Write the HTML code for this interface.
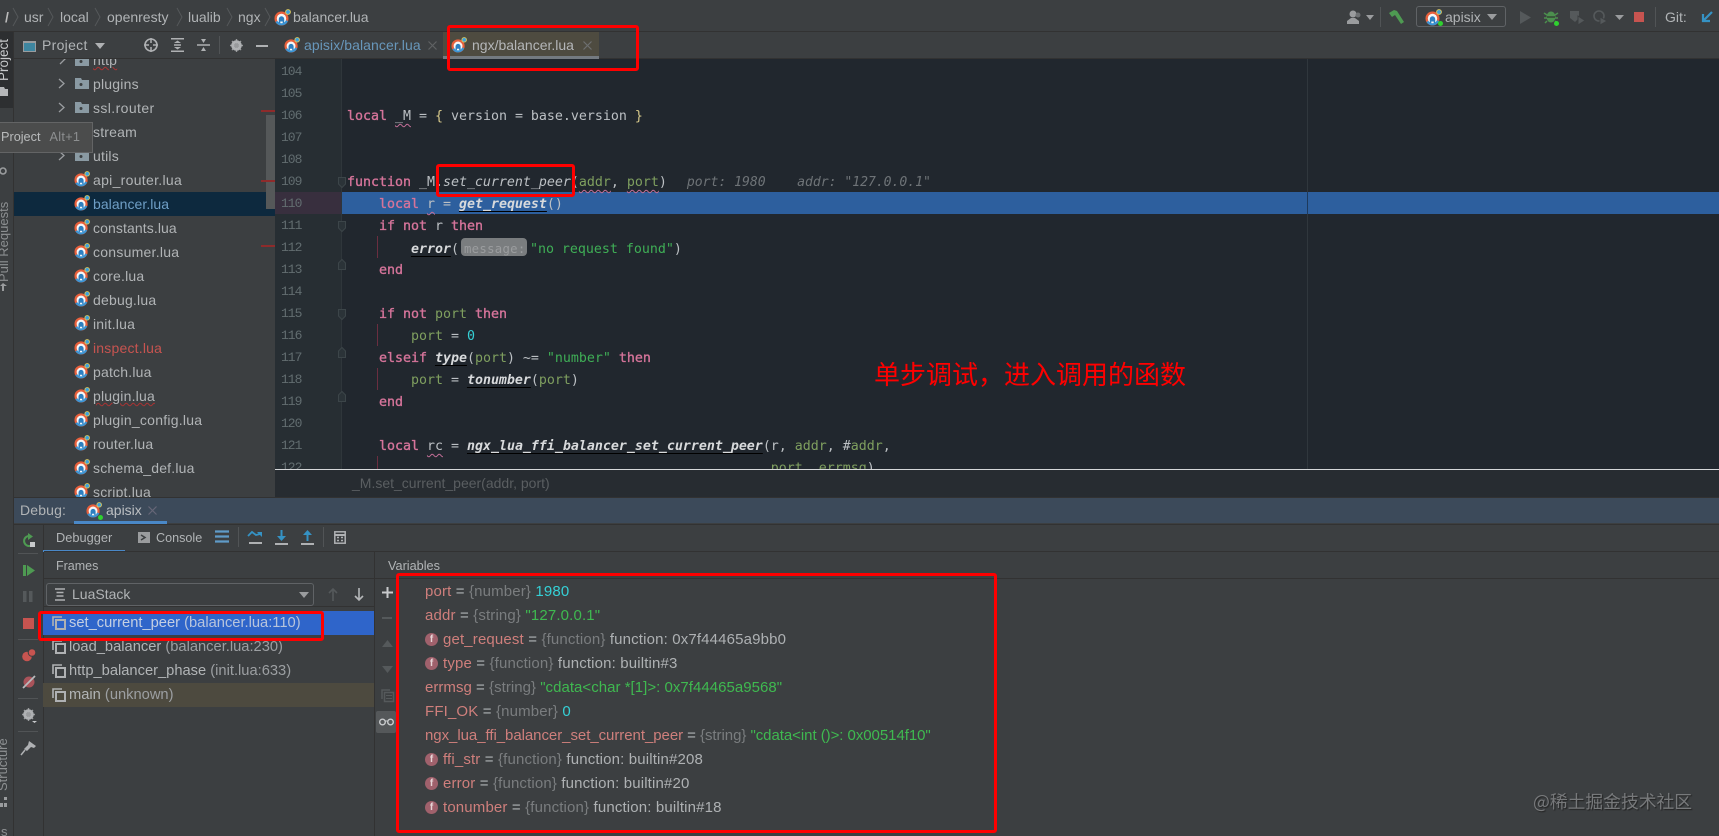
<!DOCTYPE html>
<html><head><meta charset="utf-8"><style>
html,body{margin:0;padding:0;background:#3c3f41}
#p{position:relative;width:1719px;height:836px;overflow:hidden;background:#3c3f41;font:14px/20px "Liberation Sans","Noto Sans CJK SC",sans-serif;color:#b1b4b6}
.a{position:absolute;white-space:pre}
.b{position:absolute}
.r{position:absolute;border:3.5px solid #f00;border-radius:3px;box-sizing:border-box}
svg{position:absolute;overflow:visible}
#tree .a{letter-spacing:.2px}
.mono{font-family:"DejaVu Sans Mono","Liberation Mono",monospace;font-size:13.3px;line-height:22px;color:#bcc0c4}
.l{height:22px;white-space:pre;padding-left:6px;width:1372px;letter-spacing:-.01px}
.k{color:#d5749a;-webkit-text-stroke:.35px #d5749a}
.v{color:#7f9f5f}
.s{color:#3fae56}
.n{color:#35d0d6}
.f{font-style:italic;font-weight:bold;color:#d8dadc;text-decoration:underline;text-decoration-color:#000;text-underline-offset:3px}
.w{text-decoration:underline wavy #c56f98 1px;text-underline-offset:3px}
.num{position:absolute;left:281px;width:24px;font:13px/22px "Liberation Mono",monospace;letter-spacing:-1px;color:#626d70}
.g{color:#7a7d7f}.q{color:#cf7f7c}.y{color:#35d0d6}.z{color:#3fb950}.x{color:#aeb1b3}
.va{font-size:15px;letter-spacing:.15px}
.fr{font-size:14.7px}
.fi{position:absolute;left:425px;width:13px;height:13px;border-radius:50%;background:#a0616c;color:#e6d4d6;font:bold 10px/13px "Liberation Sans",sans-serif;text-align:center}
</style></head><body><div id="p">
<svg width="0" height="0" style="position:absolute"><defs>
<symbol id="lua" viewBox="0 0 17 17">
<circle cx="7.5" cy="9.500" r="7" fill="#e8603c"/>
<path d="M1.500 13A7 7 0 0 0 14 12L7.500 9.500Z" fill="#3a94d4"/>
<circle cx="7.500" cy="9.500" r="4.700" fill="#f6f6f6"/>
<path d="M4.800 14V10A2.700 2.700 0 0 1 10.200 10V14H8.700V12.500H6.300V14Z" fill="#2d7fc0"/>
<circle cx="14" cy="3" r="2.400" fill="#3aa0e0" stroke="#d8c860"/>
</symbol>
<symbol id="stk" viewBox="0 0 14 14"><path d="M1 10V1H10" fill="none" stroke="#afb1b3" stroke-width="1.6"/><rect x="4" y="4" width="9" height="9" fill="none" stroke="#afb1b3" stroke-width="2"/></symbol>
<symbol id="fld" viewBox="0 0 14 11"><path d="M0 0H6L7 2H14V11H0Z" fill="#8a9aa3"/><circle cx="6" cy="6.5" r="1.5" fill="#3c3f41"/></symbol>
<symbol id="chv" viewBox="0 0 7 11"><path d="M1 1L6 5.5L1 10" fill="none" stroke="#9a9da0" stroke-width="1.3"/></symbol>
<symbol id="bc" viewBox="0 0 7 22"><path d="M1 2L6 11L1 20" fill="none" stroke="#55585a" stroke-width="1"/></symbol>
</defs></svg>

<!-- top bar -->
<div class="b" style="left:0;top:31px;width:1719px;height:1px;background:#323232"></div>
<div class="a" style="left:5px;top:7px;font-weight:bold;color:#bbb">/</div>
<svg style="left:12px;top:6px" width="7" height="22"><use href="#bc"/></svg>
<div class="a" style="left:24px;top:7px">usr</div>
<svg style="left:47px;top:6px" width="7" height="22"><use href="#bc"/></svg>
<div class="a" style="left:60px;top:7px">local</div>
<svg style="left:94px;top:6px" width="7" height="22"><use href="#bc"/></svg>
<div class="a" style="left:107px;top:7px">openresty</div>
<svg style="left:176px;top:6px" width="7" height="22"><use href="#bc"/></svg>
<div class="a" style="left:188px;top:7px">lualib</div>
<svg style="left:226px;top:6px" width="7" height="22"><use href="#bc"/></svg>
<div class="a" style="left:238px;top:7px">ngx</div>
<svg style="left:264px;top:6px" width="7" height="22"><use href="#bc"/></svg>
<svg style="left:274px;top:9px" width="17" height="17"><use href="#lua"/></svg>
<div class="a" style="left:293px;top:7px">balancer.lua</div>

<!-- top right toolbar -->
<svg style="left:1347px;top:10px" width="15" height="14"><circle cx="6" cy="4" r="3.5" fill="#9a9c9e"/><path d="M0 14V11L4 8H8L12 11V14Z" fill="#9a9c9e"/><circle cx="11" cy="5" r="2.5" fill="#6d7072"/></svg>
<svg style="left:1365px;top:15px" width="10" height="5"><path d="M1 0H9L5 5Z" fill="#9a9c9e"/></svg>
<div class="b" style="left:1380px;top:7px;width:1px;height:20px;background:#515456"></div>
<svg style="left:1389px;top:9px" width="16" height="15"><path d="M0 4L5 1L8 2L15 13L12 15L6 6L3 8Z" fill="#4e9a52"/></svg>
<div class="b" style="left:1416px;top:6px;width:90px;height:21px;border:1px solid #606366;border-radius:3px;box-sizing:border-box"></div>
<svg style="left:1425px;top:9px" width="17" height="17"><use href="#lua"/></svg>
<div class="b" style="left:1438px;top:21px;width:5px;height:5px;border-radius:50%;background:#2fd12f"></div>
<div class="a" style="left:1445px;top:7px">apisix</div>
<svg style="left:1487px;top:14px" width="10" height="6"><path d="M0 0H10L5 6Z" fill="#9a9c9e"/></svg>
<svg style="left:1520px;top:11px" width="11" height="13"><path d="M0 0L11 6.5L0 13Z" fill="#55595b"/></svg>
<svg style="left:1544px;top:9px" width="15" height="15"><ellipse cx="7" cy="8" rx="4.5" ry="5.5" fill="#4c8f4e"/><path d="M0 4L3 6M14 4L11 6M0 9H3M14 9H11M1 14L3 12M13 14L11 12" stroke="#4c8f4e" stroke-width="1.5"/><path d="M3 8H11" stroke="#2f3a30" stroke-width="1.3"/></svg>
<div class="b" style="left:1554px;top:21px;width:5px;height:5px;border-radius:50%;background:#2fd12f"></div>
<svg style="left:1570px;top:10px" width="15" height="15"><path d="M0 1H9V8L5 12L0 8Z" fill="#55595b"/><path d="M8 6L15 10.5L8 15Z" fill="#55595b" stroke="#3c3f41"/></svg>
<svg style="left:1593px;top:10px" width="15" height="15"><circle cx="6" cy="6" r="5" fill="none" stroke="#55595b" stroke-width="1.6"/><path d="M7 7L14 11L7 15Z" fill="#55595b" stroke="#3c3f41"/></svg>
<svg style="left:1615px;top:15px" width="9" height="5"><path d="M0 0H9L4.500 5Z" fill="#9a9c9e"/></svg>
<div class="b" style="left:1634px;top:12px;width:10px;height:10px;background:#c75450"></div>
<div class="b" style="left:1655px;top:7px;width:1px;height:20px;background:#515456"></div>
<div class="a" style="left:1665px;top:7px">Git:</div>
<svg style="left:1701px;top:11px" width="12" height="12"><path d="M11 1L2 10M2 3V10H9" fill="none" stroke="#3592c4" stroke-width="2.2"/></svg>

<!-- left strip -->
<div class="b" style="left:13px;top:32px;width:1px;height:804px;background:#323232"></div>
<div class="b" style="left:0;top:32px;width:13px;height:76px;background:#2d2f31"></div>
<div class="a" style="left:-3px;top:81px;transform-origin:0 0;transform:rotate(-90deg);color:#c8cacc;line-height:14px;font-size:13.5px">Project</div>
<svg style="left:0;top:87px" width="8" height="9"><path d="M0 0H4L5 2H8V9H0Z" fill="#b5b7b9"/></svg>
<div class="a" style="left:-3px;top:282px;transform-origin:0 0;transform:rotate(-90deg);color:#8d9092;line-height:14px;font-size:13px">Pull Requests</div>
<svg style="left:0;top:166px" width="8" height="10"><circle cx="3" cy="5" r="3" fill="none" stroke="#9a9c9e" stroke-width="1.6"/></svg>
<svg style="left:0;top:283px" width="8" height="8"><path d="M3 0L0 3H2V8H4V3H7Z" fill="#9a9c9e"/></svg>
<div class="a" style="left:-4px;top:791px;transform-origin:0 0;transform:rotate(-90deg);color:#8d9092;line-height:14px;font-size:13px">Structure</div>
<svg style="left:0;top:797px" width="8" height="10"><path d="M0 6H3V10H0ZM4 0H7V3H4ZM4 6H7V10H4Z" fill="#9a9c9e"/></svg>
<div class="a" style="left:1px;top:822px;color:#8d9092;font-size:13px">s</div>

<!-- project header -->
<div class="b" style="left:14px;top:58px;width:261px;height:1px;background:#323232"></div>
<div class="b" style="left:23px;top:41px;width:13px;height:11px;border:1px solid #9a9c9e;background:#3e86a0;box-sizing:border-box;border-top-width:2px"></div>
<div class="a" style="left:42px;top:35px;letter-spacing:.3px">Project</div>
<svg style="left:95px;top:43px" width="10" height="6"><path d="M0 0H10L5 6Z" fill="#afb1b3"/></svg>
<svg style="left:144px;top:38px" width="14" height="14"><circle cx="7" cy="7" r="6" fill="none" stroke="#afb1b3" stroke-width="1.6"/><path d="M7 0V5M7 9V14M0 7H5M9 7H14" stroke="#afb1b3" stroke-width="1.5"/></svg>
<svg style="left:171px;top:38px" width="13" height="14"><path d="M0 .8H13M0 13.200H13M3 7H10" stroke="#afb1b3" stroke-width="1.5"/><path d="M3 5L6.500 2.500L10 5ZM3 9L6.500 11.500L10 9Z" fill="#afb1b3"/></svg>
<svg style="left:197px;top:38px" width="13" height="14"><path d="M0 7H13" stroke="#afb1b3" stroke-width="1.5"/><path d="M4 1H9L6.500 5ZM4 13H9L6.500 9Z" fill="#afb1b3"/></svg>
<div class="b" style="left:219px;top:36px;width:1px;height:18px;background:#515456"></div>
<svg style="left:230px;top:39px" width="13" height="13"><circle cx="6.500" cy="6.500" r="3.800" fill="none" stroke="#afb1b3" stroke-width="3"/><path d="M6.500 0V13M0 6.500H13M2 2L11 11M11 2L2 11" stroke="#afb1b3" stroke-width="1.400" opacity=".8"/></svg>
<div class="b" style="left:256px;top:45px;width:12px;height:2px;background:#afb1b3"></div>

<!-- tree -->
<div class="b" style="left:14px;top:59px;width:261px;height:438px;overflow:hidden">
<div class="b" style="left:0;top:133px;width:261px;height:24px;background:#0d293e"></div>
</div>
<div class="b" style="left:14px;top:59px;width:261px;height:438px;overflow:hidden" id="tree">
<svg style="left:45px;top:0" width="7" height="5"><path d="M1 -5L6 0L1 5" fill="none" stroke="#9a9da0" stroke-width="1.3"/></svg>
<svg style="left:61px;top:-4px" width="14" height="11"><use href="#fld"/></svg>
<div class="a" style="left:79px;top:-9px;text-decoration:underline wavy #a33 1px">http</div>
<svg style="left:44px;top:19px" width="7" height="11"><use href="#chv"/></svg>
<svg style="left:61px;top:19px" width="14" height="11"><use href="#fld"/></svg>
<div class="a" style="left:79px;top:15px">plugins</div>
<svg style="left:44px;top:43px" width="7" height="11"><use href="#chv"/></svg>
<svg style="left:61px;top:43px" width="14" height="11"><use href="#fld"/></svg>
<div class="a" style="left:79px;top:39px;letter-spacing:.4px">ssl.router</div>
<div class="a" style="left:79px;top:63px">stream</div>
<svg style="left:44px;top:91px" width="7" height="11"><use href="#chv"/></svg>
<svg style="left:61px;top:91px" width="14" height="11"><use href="#fld"/></svg>
<div class="a" style="left:79px;top:87px">utils</div>
<svg style="left:60px;top:112px" width="16" height="16"><use href="#lua"/></svg><div class="a" style="left:79px;top:111px;letter-spacing:.3px">api_router.lua</div>
<svg style="left:60px;top:136px" width="16" height="16"><use href="#lua"/></svg><div class="a" style="left:79px;top:135px;color:#6f9fc6;letter-spacing:.05px">balancer.lua</div>
<svg style="left:60px;top:160px" width="16" height="16"><use href="#lua"/></svg><div class="a" style="left:79px;top:159px;letter-spacing:.1px">constants.lua</div>
<svg style="left:60px;top:184px" width="16" height="16"><use href="#lua"/></svg><div class="a" style="left:79px;top:183px;letter-spacing:.25px">consumer.lua</div>
<svg style="left:60px;top:208px" width="16" height="16"><use href="#lua"/></svg><div class="a" style="left:79px;top:207px">core.lua</div>
<svg style="left:60px;top:232px" width="16" height="16"><use href="#lua"/></svg><div class="a" style="left:79px;top:231px">debug.lua</div>
<svg style="left:60px;top:256px" width="16" height="16"><use href="#lua"/></svg><div class="a" style="left:79px;top:255px">init.lua</div>
<svg style="left:60px;top:280px" width="16" height="16"><use href="#lua"/></svg><div class="a" style="left:79px;top:279px;color:#c75450">inspect.lua</div>
<svg style="left:60px;top:304px" width="16" height="16"><use href="#lua"/></svg><div class="a" style="left:79px;top:303px">patch.lua</div>
<svg style="left:60px;top:328px" width="16" height="16"><use href="#lua"/></svg><div class="a" style="left:79px;top:327px;text-decoration:underline wavy #a33 1px">plugin.lua</div>
<svg style="left:60px;top:352px" width="16" height="16"><use href="#lua"/></svg><div class="a" style="left:79px;top:351px;letter-spacing:.25px">plugin_config.lua</div>
<svg style="left:60px;top:376px" width="16" height="16"><use href="#lua"/></svg><div class="a" style="left:79px;top:375px">router.lua</div>
<svg style="left:60px;top:400px" width="16" height="16"><use href="#lua"/></svg><div class="a" style="left:79px;top:399px">schema_def.lua</div>
<svg style="left:60px;top:424px" width="16" height="16"><use href="#lua"/></svg><div class="a" style="left:79px;top:423px">script.lua</div>
</div>
<div class="b" style="left:266px;top:115px;width:9px;height:94px;background:#555859"></div>
<div class="b" style="left:261px;top:110px;width:14px;height:2px;background:#8e2b2b"></div>
<div class="b" style="left:261px;top:180px;width:14px;height:2px;background:#8e2b2b"></div>
<div class="b" style="left:261px;top:245px;width:14px;height:2px;background:#8e2b2b"></div>

<!-- tooltip -->
<div class="a" style="left:-1px;top:122px;width:94px;height:31px;background:#4b4c4c;border:1px solid #636465;box-sizing:border-box;font-size:12.7px;line-height:29px;color:#b9bbbc;padding-left:1px">Project<span style="color:#8d8f90;margin-left:9px;letter-spacing:.3px">Alt+1</span></div>

<!-- tabs -->
<div class="b" style="left:275px;top:32px;width:1444px;height:27px;background:#3c3f41;border-bottom:1px solid #323232;box-sizing:border-box"></div>
<svg style="left:284px;top:37px" width="16" height="16"><use href="#lua"/></svg>
<div class="a" style="left:304px;top:35px;color:#6897bb;letter-spacing:.08px">apisix/balancer.lua</div>
<svg style="left:428px;top:41px" width="9" height="9"><path d="M.5 .5L8.500 8.500M8.500 .5L.5 8.500" stroke="#5f6264" stroke-width="1.200"/></svg>
<div class="b" style="left:443px;top:32px;width:156px;height:24px;background:#4e4b40"></div>
<div class="b" style="left:443px;top:56px;width:156px;height:3px;background:#747a80"></div>
<svg style="left:451px;top:37px" width="16" height="16"><use href="#lua"/></svg>
<div class="a" style="left:472px;top:35px;color:#b4b6b8">ngx/balancer.lua</div>
<svg style="left:583px;top:41px" width="9" height="9"><path d="M.5 .5L8.500 8.500M8.500 .5L.5 8.500" stroke="#6d6f70" stroke-width="1.200"/></svg>

<!-- editor -->
<div class="b" style="left:275px;top:59px;width:1444px;height:410px;background:#21272e;overflow:hidden">
<div class="b" style="left:0;top:0;width:67px;height:410px;background:#272e33;border-right:1px solid #2f363b;box-sizing:border-box"></div>
<div class="b" style="left:0;top:133px;width:66px;height:22px;background:#382f3e"></div>
<div class="b" style="left:1032px;top:0;width:1px;height:410px;background:#30373d"></div>
</div>
<div class="b" style="left:0;top:1px">
<div class="num" style="top:60px">104</div><div class="num" style="top:82px">105</div><div class="num" style="top:104px">106</div><div class="num" style="top:126px">107</div><div class="num" style="top:148px">108</div><div class="num" style="top:170px">109</div><div class="num" style="top:192px">110</div><div class="num" style="top:214px">111</div><div class="num" style="top:236px">112</div><div class="num" style="top:258px">113</div><div class="num" style="top:280px">114</div><div class="num" style="top:302px">115</div><div class="num" style="top:324px">116</div><div class="num" style="top:346px">117</div><div class="num" style="top:368px">118</div><div class="num" style="top:390px">119</div><div class="num" style="top:412px">120</div><div class="num" style="top:434px">121</div><div class="num" style="top:456px;height:12px;overflow:hidden">122</div>
</div>
<svg style="left:338px;top:60px" width="9" height="340">
<g fill="#2b3338" stroke="#3c4549"><path d="M.5 117.500H7.500V124L4 127.500L.5 124Z"/><path d="M.5 161.500H7.500V168L4 171.500L.5 168Z"/><path d="M.5 249.500H7.500V256L4 259.500L.5 256Z"/><path d="M.5 209.500V203L4 199.500L7.500 203V209.500Z"/><path d="M.5 297.500V291L4 287.500L7.500 291V297.500Z"/><path d="M.5 341.500V335L4 331.500L7.500 335V341.500Z"/></g>
</svg>
<div class="b" style="left:342px;top:192px;width:1377px;height:22px;background:#2d5f9e"></div>
<div class="b" style="left:1307px;top:192px;width:1px;height:22px;background:#1e3a5c"></div>
<div class="b" style="left:377px;top:236px;width:1px;height:22px;background:#6b2e40"></div>
<div class="b" style="left:377px;top:324px;width:1px;height:22px;background:#6b2e40"></div>
<div class="b" style="left:377px;top:368px;width:1px;height:22px;background:#6b2e40"></div>
<div class="b" style="left:377px;top:456px;width:1px;height:13px;background:#6b2e40"></div>
<div class="b" style="left:461px;top:238px;width:66px;height:18px;background:#7a7d7f;border-radius:4px"></div>
<div class="b mono" style="left:341px;top:62px;width:1378px;height:407px;overflow:hidden">
<div class="l"> </div><div class="l"> </div>
<div class="l"><span class="k">local</span> <span class="w">_M</span> = <span style="color:#d6c88a">{</span> version = base.version <span style="color:#d6c88a">}</span></div>
<div class="l"> </div><div class="l"> </div>
<div class="l"><span class="k">function</span> _M.<span style="font-style:italic">set_current_peer</span>(<span class="v w">addr</span>, <span class="v w">port</span>)<span style="font-style:italic;color:#6e7377;font-size:13.1px;margin-left:20px">port: 1980    addr: "127.0.0.1"</span></div>
<div class="l">    <span class="k">local</span> <span class="w">r</span> = <span class="f">get_request</span>()</div>
<div class="l">    <span class="k">if</span> <span class="k">not</span> r <span class="k">then</span></div>
<div class="l">        <span class="f">error</span>(<span style="display:inline-block;width:71px;color:#9b9d9f;font-size:12.3px;letter-spacing:.3px;box-sizing:border-box;padding-left:5px">message:</span><span class="s">"no request found"</span>)</div>
<div class="l">    <span class="k">end</span></div>
<div class="l"> </div>
<div class="l">    <span class="k">if</span> <span class="k">not</span> <span class="v">port</span> <span class="k">then</span></div>
<div class="l">        <span class="v">port</span> = <span class="n">0</span></div>
<div class="l">    <span class="k">elseif</span> <span class="f">type</span>(<span class="v">port</span>) ~= <span class="s">"number"</span> <span class="k">then</span></div>
<div class="l">        <span class="v">port</span> = <span class="f">tonumber</span>(<span class="v">port</span>)</div>
<div class="l">    <span class="k">end</span></div>
<div class="l"> </div>
<div class="l">    <span class="k">local</span> <span class="w">rc</span> = <span class="f">ngx_lua_ffi_balancer_set_current_peer</span>(r, <span class="v">addr</span>, #<span class="v">addr</span>,</div>
<div class="l">                                                     <span class="v">port</span>, <span class="v">errmsg</span>)</div>
</div>
<div class="b" style="left:275px;top:469px;width:1444px;height:1px;background:#d5d7d9"></div>
<div class="b" style="left:275px;top:470px;width:1444px;height:27px;background:#272c31"></div>
<div class="a" style="left:352px;top:473px;color:#5a5e61">_M.set_current_peer(addr, port)</div>
<div class="a" style="left:874px;top:358px;font-size:26px;line-height:32px;color:#f00;font-family:'Noto Sans CJK SC',sans-serif">单步调试，进入调用的函数</div>

<!-- debug header -->
<div class="b" style="left:14px;top:497px;width:1705px;height:26px;background:#3c4a5a;border-top:1px solid #323232;box-sizing:border-box"></div>
<div class="a" style="left:20px;top:500px;letter-spacing:.15px">Debug:</div>
<svg style="left:86px;top:502px" width="16" height="16"><use href="#lua"/></svg>
<div class="b" style="left:98px;top:515px;width:5px;height:5px;border-radius:50%;background:#2fd12f"></div>
<div class="a" style="left:106px;top:500px;color:#bcbfc2">apisix</div>
<svg style="left:148px;top:506px" width="9" height="9"><path d="M.5 .5L8.500 8.500M8.500 .5L.5 8.500" stroke="#667" stroke-width="1.200"/></svg>
<div class="b" style="left:74px;top:521px;width:93px;height:3px;background:#4a88c7"></div>
<div class="b" style="left:14px;top:524px;width:1705px;height:1px;background:#323232"></div>

<!-- debug toolbar -->
<div class="b" style="left:43px;top:525px;width:1px;height:311px;background:#323232"></div>
<div class="a" style="left:56px;top:528px;font-size:12.8px">Debugger</div>
<div class="b" style="left:43px;top:550px;width:82px;height:2px;background:#4a88c7"></div>
<div class="b" style="left:44px;top:551px;width:1675px;height:1px;background:#323232"></div>
<div class="b" style="left:138px;top:532px;width:12px;height:11px;background:#9a9c9e"></div>
<svg style="left:140px;top:534px" width="7" height="7"><path d="M1 1L5 3.500L1 6" fill="none" stroke="#3c3f41" stroke-width="1.500"/></svg>
<div class="a" style="left:156px;top:528px;font-size:12.6px">Console</div>
<svg style="left:215px;top:530px" width="14" height="13"><path d="M0 1.500H14M0 6.500H14M0 11.500H14" stroke="#5f9bc8" stroke-width="2.200"/></svg>
<div class="b" style="left:238px;top:527px;width:1px;height:20px;background:#515456"></div>
<svg style="left:248px;top:530px" width="15" height="15"><path d="M0 6L4 2L8 5L12 4" fill="none" stroke="#3592c4" stroke-width="1.800"/><path d="M9 2H14V7Z" fill="#3592c4"/><path d="M1 13H14" stroke="#afb1b3" stroke-width="2"/></svg>
<svg style="left:275px;top:530px" width="13" height="15"><path d="M6.500 0V8" stroke="#3592c4" stroke-width="2"/><path d="M2 6H11L6.500 11Z" fill="#3592c4"/><path d="M0 14H13" stroke="#afb1b3" stroke-width="2"/></svg>
<svg style="left:301px;top:530px" width="13" height="15"><path d="M6.500 11V4" stroke="#3592c4" stroke-width="2"/><path d="M2 5H11L6.500 0Z" fill="#3592c4"/><path d="M0 14H13" stroke="#afb1b3" stroke-width="2"/></svg>
<div class="b" style="left:323px;top:527px;width:1px;height:20px;background:#515456"></div>
<svg style="left:334px;top:531px" width="12" height="13"><rect x=".8" y=".8" width="10.400" height="11.400" fill="none" stroke="#afb1b3" stroke-width="1.500"/><path d="M1 4H11" stroke="#afb1b3" stroke-width="2"/><path d="M3 6.500H5M7 6.500H9M3 9.500H5M7 9.500H9" stroke="#afb1b3" stroke-width="1.500"/></svg>

<!-- left debug column -->
<svg style="left:22px;top:533px" width="14" height="15"><path d="M7 3A5 5 0 1 0 12 9" fill="none" stroke="#4e9a52" stroke-width="2"/><path d="M6 0L11 3.500L6 7Z" fill="#4e9a52"/><rect x="8" y="9" width="5" height="5" fill="#c8cacc"/></svg>
<div class="b" style="left:18px;top:553px;width:20px;height:1px;background:#515456"></div>
<svg style="left:23px;top:565px" width="12" height="11"><rect width="3" height="11" fill="#4e9a52"/><path d="M4 0L12 5.500L4 11Z" fill="#4e9a52"/></svg>
<svg style="left:23px;top:591px" width="10" height="11"><path d="M0 0H3.500V11H0ZM6 0H9.500V11H6Z" fill="#55595b"/></svg>
<div class="b" style="left:23px;top:618px;width:11px;height:11px;background:#c75450"></div>
<div class="b" style="left:18px;top:639px;width:20px;height:1px;background:#515456"></div>
<svg style="left:22px;top:648px" width="14" height="14"><circle cx="5" cy="8.500" r="4.800" fill="#c75450"/><circle cx="10" cy="4.500" r="3.800" fill="#c75450" stroke="#3c3f41"/></svg>
<svg style="left:22px;top:675px" width="14" height="14"><circle cx="7" cy="7" r="5.500" fill="#a9535a"/><path d="M1 13L13 1" stroke="#b8babc" stroke-width="1.800"/></svg>
<div class="b" style="left:18px;top:698px;width:20px;height:1px;background:#515456"></div>
<svg style="left:22px;top:708px" width="15" height="15"><circle cx="6.500" cy="6.500" r="3.800" fill="none" stroke="#afb1b3" stroke-width="3"/><path d="M6.500 0V13M0 6.500H13M2 2L11 11M11 2L2 11" stroke="#afb1b3" stroke-width="1.400" opacity=".8"/><path d="M10 13H15L12.500 15Z" fill="#c8cacc"/></svg>
<div class="b" style="left:18px;top:731px;width:20px;height:1px;background:#515456"></div>
<svg style="left:21px;top:741px" width="15" height="14"><path d="M8 0L15 5L13 7L10 6L6 10L3 8L7 4Z" fill="#afb1b3"/><path d="M4 9L0 14" stroke="#afb1b3" stroke-width="1.500"/></svg>

<!-- frames -->
<div class="a" style="left:56px;top:556px;font-size:12.5px">Frames</div>
<div class="a" style="left:388px;top:556px;font-size:12.7px">Variables</div>
<div class="b" style="left:44px;top:578px;width:1675px;height:1px;background:#323232"></div>
<div class="b" style="left:374px;top:552px;width:1px;height:284px;background:#323232"></div>
<div class="b" style="left:46px;top:583px;width:268px;height:23px;border:1px solid #606366;border-radius:3px;box-sizing:border-box"></div>
<svg style="left:54px;top:588px" width="13" height="13"><path d="M1 1H11M2.500 4.500H9.500M2.500 8H9.500M1 12H11" stroke="#afb1b3" stroke-width="1.600"/></svg>
<div class="a" style="left:72px;top:584px;font-size:14px">LuaStack</div>
<svg style="left:299px;top:592px" width="10" height="6"><path d="M0 0H10L5 6Z" fill="#9a9c9e"/></svg>
<svg style="left:328px;top:588px" width="10" height="13"><path d="M5 13V1M1 5L5 1L9 5" fill="none" stroke="#55595b" stroke-width="1.600"/></svg>
<svg style="left:354px;top:588px" width="10" height="13"><path d="M5 0V12M1 8L5 12L9 8" fill="none" stroke="#b5b7b9" stroke-width="1.600"/></svg>
<div class="b" style="left:44px;top:606px;width:330px;height:1px;background:#323232"></div>
<div class="b" style="left:43px;top:611px;width:331px;height:24px;background:#2f65ca"></div>
<div class="b" style="left:43px;top:683px;width:331px;height:24px;background:#4d4a3f"></div>
<svg style="left:52px;top:616px" width="14" height="14"><use href="#stk"/></svg>
<div class="a fr" style="left:69px;top:613px;color:#c4cfe2">set_current_peer <span style="color:#b7c4dc">(balancer.lua:110)</span></div>
<svg style="left:52px;top:640px" width="14" height="14"><use href="#stk"/></svg>
<div class="a fr" style="left:69px;top:637px">load_balancer <span style="color:#9c9fa2">(balancer.lua:230)</span></div>
<svg style="left:52px;top:664px" width="14" height="14"><use href="#stk"/></svg>
<div class="a fr" style="left:69px;top:661px">http_balancer_phase <span style="color:#9c9fa2">(init.lua:633)</span></div>
<svg style="left:52px;top:688px" width="14" height="14"><use href="#stk"/></svg>
<div class="a fr" style="left:69px;top:685px">main <span style="color:#9c9fa2">(unknown)</span></div>

<!-- var buttons -->
<svg style="left:382px;top:587px" width="11" height="11"><path d="M5.500 0V11M0 5.500H11" stroke="#c8cacc" stroke-width="2"/></svg>
<div class="b" style="left:382px;top:617px;width:10px;height:2px;background:#55595b"></div>
<svg style="left:382px;top:640px" width="11" height="7"><path d="M0 7L5.500 0L11 7Z" fill="#55595b"/></svg>
<svg style="left:382px;top:666px" width="11" height="7"><path d="M0 0L5.500 7L11 0Z" fill="#55595b"/></svg>
<svg style="left:381px;top:689px" width="13" height="13"><path d="M1 10V1H9" fill="none" stroke="#55595b" stroke-width="1.500"/><rect x="3.500" y="3.500" width="9" height="9" fill="none" stroke="#55595b" stroke-width="1.500"/><path d="M5 6.500H11M5 9.500H11" stroke="#55595b"/></svg>
<div class="b" style="left:376px;top:711px;width:20px;height:22px;background:#55585a;border-radius:2px"></div>
<svg style="left:379px;top:718px" width="15" height="8"><circle cx="3.500" cy="4" r="2.800" fill="none" stroke="#c8cacc" stroke-width="1.400"/><circle cx="11.500" cy="4" r="2.800" fill="none" stroke="#c8cacc" stroke-width="1.400"/><path d="M6 3H9" stroke="#c8cacc"/></svg>

<!-- variables -->
<div class="a va" style="left:425px;top:582px"><span class="q">port</span> = <span class="g">{number}</span> <span class="y">1980</span></div>
<div class="a va" style="left:425px;top:606px"><span class="q">addr</span> = <span class="g">{string}</span> <span class="z">"127.0.0.1"</span></div>
<div class="fi" style="top:633px">f</div><div class="a va" style="left:443px;top:630px"><span class="q">get_request</span> = <span class="g">{function}</span> <span class="x">function: 0x7f44465a9bb0</span></div>
<div class="fi" style="top:657px">f</div><div class="a va" style="left:443px;top:654px"><span class="q">type</span> = <span class="g">{function}</span> <span class="x">function: builtin#3</span></div>
<div class="a va" style="left:425px;top:678px;letter-spacing:.03px"><span class="q">errmsg</span> = <span class="g">{string}</span> <span class="z">"cdata&lt;char *[1]&gt;: 0x7f44465a9568"</span></div>
<div class="a va" style="left:425px;top:702px"><span class="q">FFI_OK</span> = <span class="g">{number}</span> <span class="y">0</span></div>
<div class="a va" style="left:425px;top:726px;letter-spacing:-.05px"><span class="q">ngx_lua_ffi_balancer_set_current_peer</span> = <span class="g">{string}</span> <span class="z">"cdata&lt;int ()&gt;: 0x00514f10"</span></div>
<div class="fi" style="top:753px">f</div><div class="a va" style="left:443px;top:750px"><span class="q">ffi_str</span> = <span class="g">{function}</span> <span class="x">function: builtin#208</span></div>
<div class="fi" style="top:777px">f</div><div class="a va" style="left:443px;top:774px"><span class="q">error</span> = <span class="g">{function}</span> <span class="x">function: builtin#20</span></div>
<div class="fi" style="top:801px">f</div><div class="a va" style="left:443px;top:798px"><span class="q">tonumber</span> = <span class="g">{function}</span> <span class="x">function: builtin#18</span></div>

<!-- red annotation boxes -->
<div class="r" style="left:447px;top:25px;width:192px;height:46px"></div>
<div class="r" style="left:436px;top:164px;width:139px;height:33px"></div>
<div class="r" style="left:38px;top:611px;width:286px;height:30px"></div>
<div class="r" style="left:396px;top:573px;width:601px;height:260px"></div>

<!-- watermark -->
<div class="a" style="left:1533px;top:789px;font-size:17.8px;line-height:24px;color:#77797b;text-shadow:1px 1px 1px #222;font-family:'Noto Sans CJK SC',sans-serif">@稀土掘金技术社区</div>
</div></body></html>
